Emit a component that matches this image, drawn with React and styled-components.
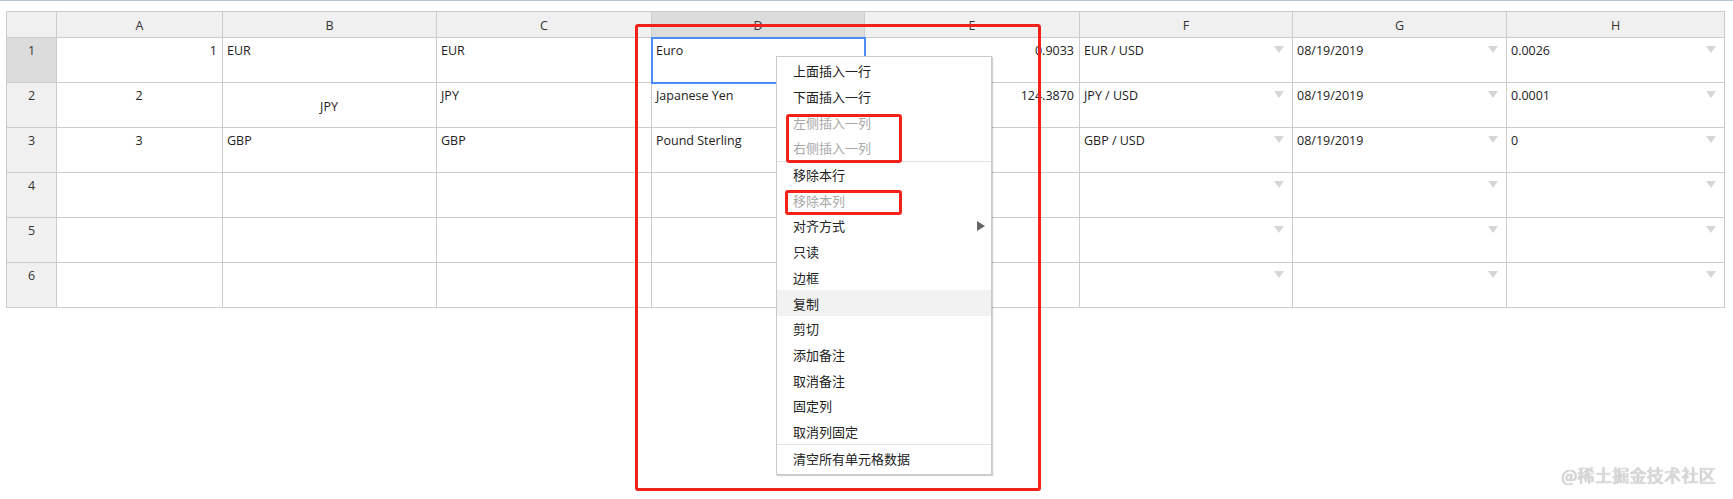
import React from 'react'
import styled, { createGlobalStyle, css } from 'styled-components'

const GlobalStyle = createGlobalStyle`
    html, body {
        margin: 0;
        padding: 0;
        background: #fff;
    }
    * { box-sizing: border-box; }
`

const Page = styled.div`
    position: relative;
    width: 1733px;
    height: 499px;
    border-top: 1px solid #b9c4d4;
    padding: 10px 0 0 6px;
    overflow: hidden;
    font-family: "Open Sans", "Noto Sans", "Noto Sans CJK SC", sans-serif;
`

const Sheet = styled.div`
    display: grid;
    grid-template-columns: 50px 166px 214px 215px 213px 215px 213px 214px 218px;
    grid-template-rows: 26px repeat(6, 45px);
    width: fit-content;
    border-top: 1px solid #ccc;
    border-left: 1px solid #ccc;
    font-size: 12.5px;
    color: #222;
`

const HeadCell = styled.div`
    display: flex;
    align-items: center;
    justify-content: center;
    padding-top: 2px;
    border-right: 1px solid #ccc;
    border-bottom: 1px solid #ccc;
    background: ${p => (p.$active ? '#dcdcdc' : '#f0f0f0')};
    color: #333;
`

const RowHead = styled.div`
    text-align: center;
    padding-top: 4px;
    line-height: 18px;
    border-right: 1px solid #ccc;
    border-bottom: 1px solid #ccc;
    background: ${p => (p.$active ? '#dcdcdc' : '#f0f0f0')};
    color: #333;
`

const Cell = styled.div`
    position: relative;
    display: flex;
    justify-content: ${p => (p.$align === 'right' ? 'flex-end' : p.$align === 'center' ? 'center' : 'flex-start')};
    align-items: ${p => (p.$middle ? 'center' : 'flex-start')};
    padding: 4px 5px 0 4px;
    line-height: 18px;
    white-space: nowrap;
    border-right: 1px solid #ccc;
    border-bottom: 1px solid #ccc;
    background: #fff;
    ${p => p.$selected && css`
        outline: 2px solid #4d8cf5;
        outline-offset: -1px;
        z-index: 1;
    `}
    ${p => p.$dropdown && css`
        &::after {
            content: '';
            position: absolute;
            right: 8px;
            top: 8px;
            border-left: 5px solid transparent;
            border-right: 5px solid transparent;
            border-top: 7px solid #d6d6d6;
        }
    `}
`

// context menu floats over the sheet
const Menu = styled.div`
    position: absolute;
    left: 776px;
    top: 55px;
    width: 216px;
    z-index: 5;
    padding: 1px 0 3px;
    background: #fff;
    border: 1px solid #c9c9c9;
    box-shadow: 1px 1px 1px rgba(0, 0, 0, 0.18);
    font-family: "Noto Sans CJK SC", "Noto Sans", sans-serif;
    font-size: 13px;
`

const MenuItem = styled.div`
    position: relative;
    display: flex;
    align-items: center;
    height: 25.7px;
    padding-left: 16px;
    color: ${p => (p.$disabled ? '#a8a8a8' : '#222')};
    background: ${p => (p.$hover ? '#f2f2f2' : 'transparent')};
`

const Arrow = styled.span`
    position: absolute;
    right: 6px;
    top: 50%;
    margin-top: -5px;
    border-top: 5px solid transparent;
    border-bottom: 5px solid transparent;
    border-left: 8px solid #666;
`

const Divider = styled.div`
    height: 1px;
    background: #e3e3e3;
`

// red annotation frames drawn on top of the screenshot
const Mark = styled.div`
    position: absolute;
    left: ${p => p.$x}px;
    top: ${p => p.$y}px;
    width: ${p => p.$w}px;
    height: ${p => p.$h}px;
    border: 3px solid #f4211b;
    border-radius: 3px;
    z-index: 8;
    pointer-events: none;
`

const Watermark = styled.div`
    position: absolute;
    right: 17px;
    top: 461px;
    font-family: "Noto Sans CJK SC", sans-serif;
    font-size: 17px;
    color: #dedede;
    text-shadow: 0 0 1px rgba(0, 0, 0, 0.45);
    letter-spacing: 0.3px;
`

const columns = ['A', 'B', 'C', 'D', 'E', 'F', 'G', 'H']

const rows = [
    [
        { v: '1', a: 'right' }, { v: 'EUR' }, { v: 'EUR' }, { v: 'Euro', sel: true },
        { v: '0.9033', a: 'right' }, { v: 'EUR / USD' }, { v: '08/19/2019' }, { v: '0.0026' },
    ],
    [
        { v: '2', a: 'center' }, { v: 'JPY', a: 'center', mid: true }, { v: 'JPY' }, { v: 'Japanese Yen' },
        { v: '124.3870', a: 'right' }, { v: 'JPY / USD' }, { v: '08/19/2019' }, { v: '0.0001' },
    ],
    [
        { v: '3', a: 'center' }, { v: 'GBP' }, { v: 'GBP' }, { v: 'Pound Sterling' },
        { v: '', a: 'right' }, { v: 'GBP / USD' }, { v: '08/19/2019' }, { v: '0' },
    ],
    [{}, {}, {}, {}, {}, {}, {}, {}],
    [{}, {}, {}, {}, {}, {}, {}, {}],
    [{}, {}, {}, {}, {}, {}, {}, {}],
]

const menu = [
    { t: '上面插入一行' },
    { t: '下面插入一行' },
    { t: '左侧插入一列', off: true },
    { t: '右侧插入一列', off: true },
    'sep',
    { t: '移除本行' },
    { t: '移除本列', off: true },
    { t: '对齐方式', sub: true },
    { t: '只读' },
    { t: '边框' },
    { t: '复制', hover: true },
    { t: '剪切' },
    { t: '添加备注' },
    { t: '取消备注' },
    { t: '固定列' },
    { t: '取消列固定' },
    'sep',
    { t: '清空所有单元格数据' },
]

const App = () => {
    return (
        <Page>
            <GlobalStyle />
            <Sheet>
                <HeadCell />
                {columns.map(c => (
                    <HeadCell key={c} $active={c === 'D'}>{c}</HeadCell>
                ))}
                {rows.map((row, r) => (
                    <React.Fragment key={r}>
                        <RowHead $active={r === 0}>{r + 1}</RowHead>
                        {row.map((cell, c) => (
                            <Cell
                                key={c}
                                $align={cell.a}
                                $middle={cell.mid}
                                $selected={cell.sel}
                                $dropdown={c >= 5}
                            >
                                {cell.v}
                            </Cell>
                        ))}
                    </React.Fragment>
                ))}
            </Sheet>

            <Menu>
                {menu.map((m, i) =>
                    m === 'sep' ? (
                        <Divider key={i} />
                    ) : (
                        <MenuItem key={i} $disabled={m.off} $hover={m.hover}>
                            {m.t}
                            {m.sub && <Arrow />}
                        </MenuItem>
                    )
                )}
            </Menu>

            <Mark $x={635} $y={23} $w={406} $h={467} />
            <Mark $x={786} $y={113} $w={116} $h={49} />
            <Mark $x={785} $y={189} $w={117} $h={25} />

            <Watermark>@稀土掘金技术社区</Watermark>
        </Page>
    )
}

export default App
